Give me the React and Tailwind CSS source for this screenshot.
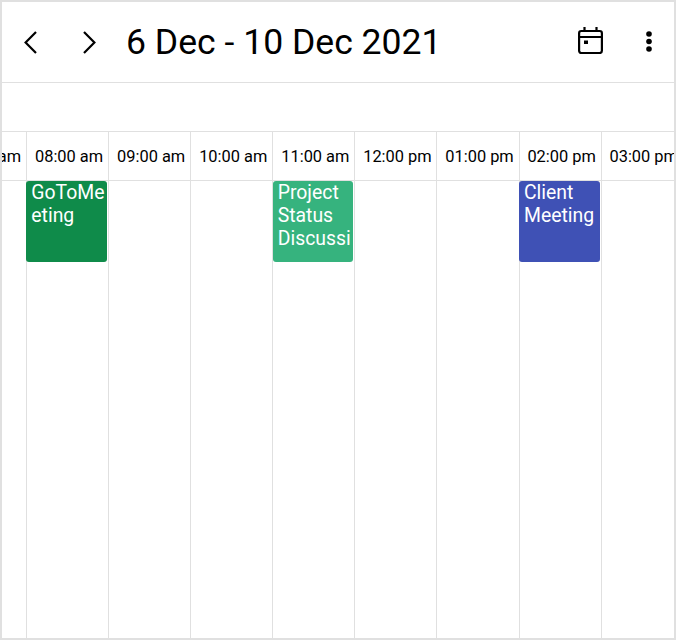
const hours = ["07:00 am","08:00 am","09:00 am","10:00 am","11:00 am","12:00 pm","01:00 pm","02:00 pm","03:00 pm"];
const events = {
  1: { title: "GoToMeeting", color: "bg-[#0f8b4a] ml-[-0.7px] w-[80.4px]" },
  4: { title: "Project Status Discussion", color: "bg-[#36b37e] ml-[-0.6px] w-[80.3px]" },
  7: { title: "Client Meeting", color: "bg-[#3f51b5] ml-[-0.6px] w-[80.7px]" },
};
export default function App() {
  return (
    <div className="w-[676px] h-[640px] border-2 border-[#e0e0e0] bg-white flex flex-col overflow-hidden text-black" style={{ fontFamily: "Roboto, sans-serif" }}>
      <div className="h-[81px] shrink-0 border-b border-[#e0e0e0] flex items-center">
        <svg className="ml-[22px] w-[13px] h-[23px] mt-[1px]" viewBox="0 0 13 23" fill="none" stroke="#000" strokeWidth="2.2"><path d="M12 1 L1.6 11.5 L12 22" /></svg>
        <svg className="ml-[46px] w-[13px] h-[23px] mt-[1px]" viewBox="0 0 13 23" fill="none" stroke="#000" strokeWidth="2.2"><path d="M1 1 L11.4 11.5 L1 22" /></svg>
        <span className="ml-[30px] text-[35.6px] leading-none mt-[1px] whitespace-nowrap">6 Dec - 10 Dec 2021</span>
        <svg className="ml-auto w-[25px] h-[27px] mt-[-3px]" viewBox="0 0 25 27" fill="none" stroke="#000" strokeWidth="2.2"><rect x="1.1" y="4" width="22.8" height="22" rx="2.2" /><path d="M1 10 H24 M6.5 0 V5 M18.5 0 V5" /><rect x="6" y="13.5" width="4" height="3.5" fill="#000" stroke="none" /></svg>
        <svg className="ml-[43px] mr-[22px] w-[6px] h-[21px] mt-[-1px]" viewBox="0 0 6 21" fill="#000"><circle cx="3" cy="3" r="2.8" /><circle cx="3" cy="10.5" r="2.8" /><circle cx="3" cy="18" r="2.8" /></svg>
      </div>
      <div className="h-[49px] shrink-0 border-b border-[#e0e0e0]" />
      <div className="flex ml-[-57.1px] w-max shrink-0 h-[49px] border-b border-[#e0e0e0]">
        {hours.map((h) => (
          <div key={h} className="w-[82.1px] border-r border-[#e0e0e0] pl-[3px] pt-[2px] flex items-center justify-center text-[16.4px] whitespace-nowrap">{h}</div>
        ))}
      </div>
      <div className="flex ml-[-57.1px] w-max flex-1 min-h-0">
        {hours.map((h, i) => (
          <div key={h} className="w-[82.1px] border-r border-[#e0e0e0]">
            {events[i] && (
              <div className={`h-[81px] rounded-[3px] pl-[5px] overflow-hidden text-white text-[19.4px] leading-[23px] ${events[i].color}`}>
                <div className="max-h-[69px] overflow-hidden break-words">{events[i].title}</div>
              </div>
            )}
          </div>
        ))}
      </div>
    </div>
  );
}
